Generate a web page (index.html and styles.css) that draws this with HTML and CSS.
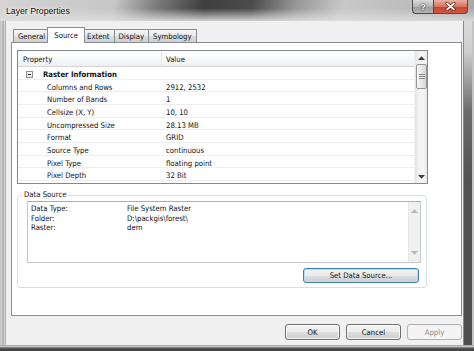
FILE: index.html
```html
<!DOCTYPE html>
<html lang="en">
<head>
    <meta charset="UTF-8">
    <title>Layer Properties</title>
    <link rel="stylesheet" href="styles.css">
</head>
<body>
    <div class="window">
        <div class="titlebar">
            <span class="title">Layer Properties</span>
            <div class="caption">
                <span class="cap-btn help">?</span>
                <span class="cap-btn close">
                    <svg width="11" height="9" viewBox="0 0 11 9">
                        <path d="M2 1.5 L9 7.5 M9 1.5 L2 7.5" stroke="#5a1a12" stroke-width="3.2" stroke-linecap="round"/>
                        <path d="M2 1.5 L9 7.5 M9 1.5 L2 7.5" stroke="#fff" stroke-width="1.8" stroke-linecap="round"/>
                    </svg>
                </span>
            </div>
        </div>

        <div class="middle">
            <div class="frame-l"></div>
            <div class="client">
                <div class="tabs">
                    <span class="tab">General</span>
                    <span class="tab active">Source</span>
                    <span class="tab">Extent</span>
                    <span class="tab">Display</span>
                    <span class="tab">Symbology</span>
                </div>

                <div class="panel">
                    <div class="proplist">
                        <div class="grid">
                            <div class="grid-head">
                                <span class="cell name">Property</span>
                                <span class="cell val">Value</span>
                            </div>
                            <div class="row category">
                                <span class="cell name"><i class="minus"></i><b>Raster Information</b></span>
                                <span class="cell val"></span>
                            </div>
                            <div class="row"><span class="cell name">Columns and Rows</span><span class="cell val">2912, 2532</span></div>
                            <div class="row"><span class="cell name">Number of Bands</span><span class="cell val">1</span></div>
                            <div class="row"><span class="cell name">Cellsize (X, Y)</span><span class="cell val">10, 10</span></div>
                            <div class="row"><span class="cell name">Uncompressed Size</span><span class="cell val">28.13 MB</span></div>
                            <div class="row"><span class="cell name">Format</span><span class="cell val">GRID</span></div>
                            <div class="row"><span class="cell name">Source Type</span><span class="cell val">continuous</span></div>
                            <div class="row"><span class="cell name">Pixel Type</span><span class="cell val">floating point</span></div>
                            <div class="row"><span class="cell name">Pixel Depth</span><span class="cell val">32 Bit</span></div>
                            <div class="row"><span class="cell name"></span><span class="cell val"></span></div>
                        </div>
                        <div class="vscroll">
                            <span class="arrow">
                                <svg width="7" height="4" viewBox="0 0 7 4"><polygon points="0,4 3.5,0.3 7,4" fill="#3c3c3c"/></svg>
                            </span>
                            <span class="thumb"><i></i><i></i><i></i></span>
                            <span class="track"></span>
                            <span class="arrow">
                                <svg width="7" height="4" viewBox="0 0 7 4"><polygon points="0,0 3.5,3.7 7,0" fill="#3c3c3c"/></svg>
                            </span>
                        </div>
                    </div>

                    <fieldset class="group">
                        <legend>Data Source</legend>
                        <div class="textbox">
                            <div class="lines">
                                <span>Data Type:</span><span>File System Raster</span>
                                <span>Folder:</span><span>D:\packgis\forest\</span>
                                <span>Raster:</span><span>dem</span>
                            </div>
                            <div class="vscroll off">
                                <span class="arrow">
                                    <svg width="7" height="4" viewBox="0 0 7 4"><polygon points="0,4 3.5,0.3 7,4" fill="#b4b4b4"/></svg>
                                </span>
                                <span class="track"></span>
                                <span class="arrow">
                                    <svg width="7" height="4" viewBox="0 0 7 4"><polygon points="0,0 3.5,3.7 7,0" fill="#b4b4b4"/></svg>
                                </span>
                            </div>
                        </div>
                        <div class="group-btns">
                            <button class="btn default">Set Data Source...</button>
                        </div>
                    </fieldset>
                </div>

                <div class="dlg-btns">
                    <button class="btn">OK</button>
                    <button class="btn">Cancel</button>
                    <button class="btn" disabled>Apply</button>
                </div>
            </div>
            <div class="frame-r"></div>
        </div>
        <div class="frame-b"></div>
    </div>
</body>
</html>
```

FILE: styles.css
```css
* {
    margin: 0;
    padding: 0;
    box-sizing: border-box;
}
body {
    width: 474px;
    height: 351px;
    overflow: hidden;
    background: #4a4a4a;
    font-family: "DejaVu Sans Condensed", "DejaVu Sans", sans-serif;
    font-size: 7.7px;
    color: #111;
}
.window {
    width: 474px;
    height: 351px;
    display: flex;
    flex-direction: column;
}

/* title bar */
.titlebar {
    height: 21px;
    display: flex;
    justify-content: space-between;
    align-items: flex-start;
    background:
        linear-gradient(to bottom, rgba(222,222,222,0) 0, rgba(222,222,222,0) 40%, rgba(222,222,222,0.9) 100%),
        linear-gradient(100deg, #d4d4d4 0%, #c6c6c6 24%, #7a7a7a 33%, #3e3e3e 43%, #4c4c4c 53%, #979797 62%, #c8c8c8 72%, #bcbcbc 86%, #a8a8a8 100%);
}
.title {
    font-family: "Liberation Sans", Arial, sans-serif;
    font-size: 8.7px;
    color: #101010;
    margin: 6px 0 0 6px;
    text-shadow: 0 0 3px #fff, 0 0 5px rgba(255,255,255,0.8);
}
.caption {
    display: flex;
    margin-right: 6px;
}
.cap-btn {
    height: 14px;
    display: flex;
    justify-content: center;
    align-items: center;
    border: 1px solid #4c4c4c;
    border-top: none;
}
.help {
    width: 21px;
    border-right: none;
    border-radius: 0 0 0 4px;
    background: linear-gradient(to bottom, #d8d8d8, #b5b5b5 50%, #9c9c9c 51%, #b4b4b4);
    font-family: "Liberation Sans", Arial, sans-serif;
    font-weight: bold;
    font-size: 9px;
    color: #fff;
    text-shadow: 0 0 2px #333, 0 0 1px #222;
}
.close {
    width: 35px;
    border-radius: 0 0 4px 0;
    background: linear-gradient(to bottom, #eab1a4, #d7735f 50%, #c7452e 51%, #d2583f);
}

/* frame */
.middle {
    height: 324px;
    display: flex;
}
.frame-l {
    width: 6px;
    background: linear-gradient(to right, #c2c2c2 0, #d6d6d6 2px, #9a9a9a 3px, #cccccc 4px, #d8d8d8 5px, #8e8e8e 6px);
}
.frame-r {
    flex: 1;
    border-left: 1px solid #8a8a8a;
    border-right: 2px solid #c4c4c4;
    background: linear-gradient(to bottom, #dadada 0, #cfcfcf 30px, #6c6c6c 90px, #525252 160px, #4e4e4e 100%);
}
.frame-b {
    flex: 1;
    background: linear-gradient(to bottom, #8e8e8e 0, #cfcfcf 1px, #b6b6b6 2px, #585858 3px, #3e3e3e 100%);
}
.client {
    width: 457px;
    background: #f0f0f0;
    padding: 0 1px 0 5px;
}

/* tabs */
.tabs {
    height: 21px;
    display: flex;
    align-items: flex-end;
    padding-left: 2px;
}
.tab {
    height: 14px;
    padding: 0 4px;
    margin-bottom: -1px;
    line-height: 13px;
    border: 1px solid #898c95;
    border-left: none;
    background: linear-gradient(to bottom, #f3f3f3, #ebebeb 50%, #dddddd 51%, #cfcfcf);
}
.tab:first-child {
    border-left: 1px solid #898c95;
}
.tab.active {
    position: relative;
    z-index: 1;
    height: 16px;
    margin: 0 -2px -1px -3px;
    padding: 0 6px;
    line-height: 15px;
    border-left: 1px solid #898c95;
    border-bottom: none;
    background: #fff;
}
.tab.active + .tab {
    border-left: none;
}

.panel {
    width: 451px;
    height: 274px;
    border: 1px solid #898c95;
    background: #fff;
    padding: 7px 0 0 5px;
}

/* property list */
.proplist {
    width: 411px;
    height: 134px;
    display: flex;
    border: 1px solid #828790;
    overflow: hidden;
}
.grid {
    flex: 1;
    overflow: hidden;
}
.grid-head, .row {
    display: grid;
    grid-template-columns: 144px 1fr;
}
.grid-head {
    height: 16px;
    line-height: 15px;
    padding-top: 1px;
    border-bottom: 1px solid #d5d5d5;
    background: linear-gradient(to bottom, #ffffff, #f6f7f8 60%, #eef0f2);
}
.grid-head .name {
    padding-left: 5px;
    border-right: 1px solid #e2e3e5;
}
.grid-head .val {
    padding-left: 4px;
}
.row {
    height: 12.67px;
    line-height: 11px;
    padding-top: 2px;
    border-bottom: 1px solid #eeeeee;
}
.row .name {
    padding-left: 29px;
}
.row .val {
    padding-left: 4px;
}
.row.category .name {
    display: flex;
    align-items: center;
    padding-left: 8px;
}
.row.category b {
    margin-left: 10px;
}
.minus {
    width: 7px;
    height: 7px;
    border: 1px solid #8f8f8f;
    background: linear-gradient(to bottom, #fff, #e6e6e6);
    display: flex;
    align-items: center;
    justify-content: center;
}
.minus::after {
    content: "";
    width: 3px;
    height: 1px;
    background: #222;
}

/* scrollbars */
.vscroll {
    width: 13px;
    display: flex;
    flex-direction: column;
    background: linear-gradient(to right, #e5e5e5, #f4f4f4 40%, #f4f4f4 70%, #e9e9e9);
    border-left: 1px solid #eeeeee;
}
.vscroll .arrow {
    height: 13px;
    display: flex;
    align-items: center;
    justify-content: center;
}
.vscroll .track {
    flex: 1;
}
.thumb {
    height: 25px;
    margin: 0 0 0 1px;
    border: 1px solid #969696;
    border-radius: 2px;
    background: linear-gradient(to right, #f5f5f5, #e8e8e8 50%, #d6d6d6);
    display: flex;
    flex-direction: column;
    align-items: center;
    justify-content: center;
    gap: 1px;
}
.thumb i {
    width: 6px;
    height: 1px;
    background: #8a8a8a;
}

/* data source group */
.group {
    width: 410px;
    height: 98px;
    margin-top: 6px;
    border: 1px solid #d5dfe5;
    border-radius: 3px;
    padding: 1px 5px 3px 9px;
}
.group legend {
    margin-left: -5px;
    padding: 0 2px;
    line-height: 10px;
}
.textbox {
    width: 394px;
    height: 62px;
    display: flex;
    border: 1px solid #c5c7cc;
    border-top-color: #abadb3;
}
.lines {
    flex: 1;
    display: grid;
    grid-template-columns: 96px 1fr;
    grid-auto-rows: 9.5px;
    line-height: 9.5px;
    padding: 2px 0 0 3px;
}
.vscroll.off {
    width: 12px;
    background: #f0f0f0;
    border-left: 1px solid #e6e6e6;
}
.vscroll.off .arrow {
    height: 14px;
    margin: 2px 0;
}
.group-btns {
    display: flex;
    justify-content: flex-end;
    margin-top: 5px;
    padding-right: 2px;
}

/* buttons */
.btn {
    width: 55px;
    height: 16px;
    border: 1px solid #707070;
    border-radius: 3px;
    font-family: inherit;
    font-size: 7.7px;
    color: #111;
    background: linear-gradient(to bottom, #f3f3f3, #ebebeb 50%, #dddddd 51%, #cfcfcf);
    box-shadow: inset 0 0 0 1px rgba(255,255,255,0.7);
}
.btn.default {
    width: 116px;
    height: 15px;
    border-color: #3c7fb1;
    box-shadow: inset 0 0 0 1px #b8def7;
}
.btn:disabled {
    color: #8d8d8d;
    border-color: #adb2b5;
    background: #f4f4f4;
    box-shadow: none;
}
.dlg-btns {
    display: flex;
    justify-content: flex-end;
    gap: 6px;
    margin-top: 8px;
}
```
